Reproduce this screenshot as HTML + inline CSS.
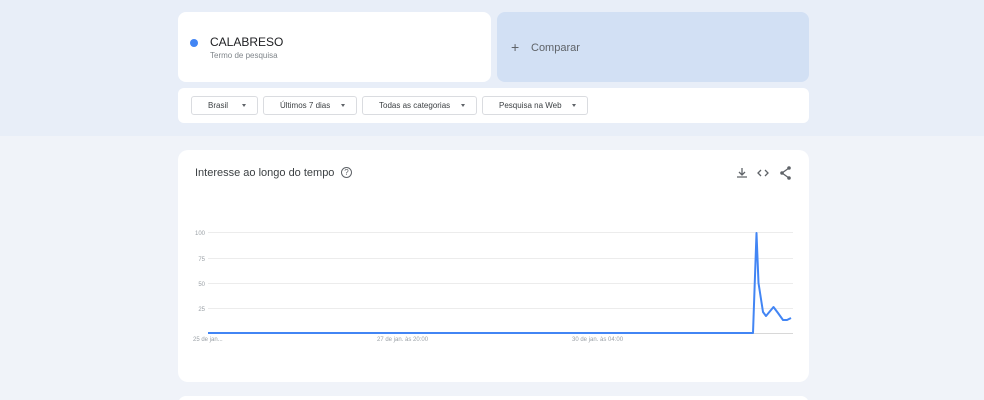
<!DOCTYPE html>
<html><head><meta charset="utf-8"><style>
*{margin:0;padding:0;box-sizing:border-box}
html,body{width:984px;height:400px;overflow:hidden}
body{background:#f0f3f9;font-family:"Liberation Sans",sans-serif;position:relative}
.top{position:absolute;left:0;top:0;width:984px;height:136px;background:#e8eef8}
.card{position:absolute;background:#fff;border-radius:8px}
.btn{position:absolute;top:96px;height:19px;border:1px solid #dadce0;border-radius:3px;font-size:8px;color:#3c4043;line-height:17px;padding-left:16px}
.btn:after{content:"";position:absolute;right:11px;top:7px;border-left:2.5px solid transparent;border-right:2.5px solid transparent;border-top:3px solid #5f6368}
</style></head><body>
<div class="top"></div>
<div class="card" style="left:178px;top:12px;width:313px;height:70px">
 <div style="position:absolute;left:12px;top:27px;width:8px;height:8px;border-radius:50%;background:#4285f4"></div>
 <div style="position:absolute;left:32px;top:23px;font-size:12px;color:#202124">CALABRESO</div>
 <div style="position:absolute;left:32px;top:39px;font-size:8px;color:#80868b">Termo de pesquisa</div>
</div>
<div class="card" style="left:497px;top:12px;width:312px;height:70px;background:#d2e0f4">
 <div style="position:absolute;left:14px;top:27px;font-size:14px;color:#5f6368">+</div>
 <div style="position:absolute;left:34px;top:30px;font-size:11px;color:#5f6368">Comparar</div>
</div>
<div class="card" style="left:178px;top:88px;width:631px;height:35px;border-radius:6px"></div>
<div class="btn" style="left:191px;width:67px">Brasil</div>
<div class="btn" style="left:263px;width:94px">Últimos 7 dias</div>
<div class="btn" style="left:362px;width:115px">Todas as categorias</div>
<div class="btn" style="left:482px;width:106px">Pesquisa na Web</div>
<div class="card" style="left:178px;top:150px;width:631px;height:232px;border-radius:10px">
 <div style="position:absolute;left:17px;top:17px;font-size:11px;color:#3c4043">Interesse ao longo do tempo</div>
 <div style="position:absolute;left:163px;top:17px;width:11px;height:11px;border:1px solid #5f6368;border-radius:50%;font-size:8px;line-height:9px;text-align:center;color:#5f6368">?</div>
</div>
<div class="card" style="left:178px;top:396px;width:631px;height:20px"></div>
<svg style="position:absolute;left:0;top:0" width="984" height="400">
 <g stroke="#5f6368" stroke-width="1.3" fill="none">
  <path d="M742 168v7M739 172l3 3 3-3M737 177h10"/>
  <path d="M761 170l-3 3 3 3M765 170l3 3-3 3"/>
  <path d="M789 168l-7 5 7 5"/>
 </g>
 <g fill="#5f6368"><circle cx="789" cy="168" r="1.8"/><circle cx="782" cy="173" r="1.8"/><circle cx="789" cy="178" r="1.8"/></g>
 <g stroke="#ececec" stroke-width="1"><path d="M208 232.5H793M208 258.5H793M208 283.5H793M208 308.5H793"/></g>
 <path d="M208 333.5H793" stroke="#d8d8d8"/>
 <g font-size="6" fill="#9aa0a6" font-family="Liberation Sans">
  <text x="205" y="235" text-anchor="end">100</text><text x="205" y="261" text-anchor="end">75</text>
  <text x="205" y="286" text-anchor="end">50</text><text x="205" y="311" text-anchor="end">25</text>
  <text x="193" y="341">25 de jan...</text><text x="377" y="341">27 de jan. às 20:00</text><text x="572" y="341">30 de jan. às 04:00</text>
 </g>
 <polyline fill="none" stroke="#4285f4" stroke-width="2" stroke-linejoin="round" points="208,333 753,333 756.5,233 758.5,283 763,312 766,316 773.5,307 778,313 783,320 787,320 791,318"/>
</svg>
</body></html>
